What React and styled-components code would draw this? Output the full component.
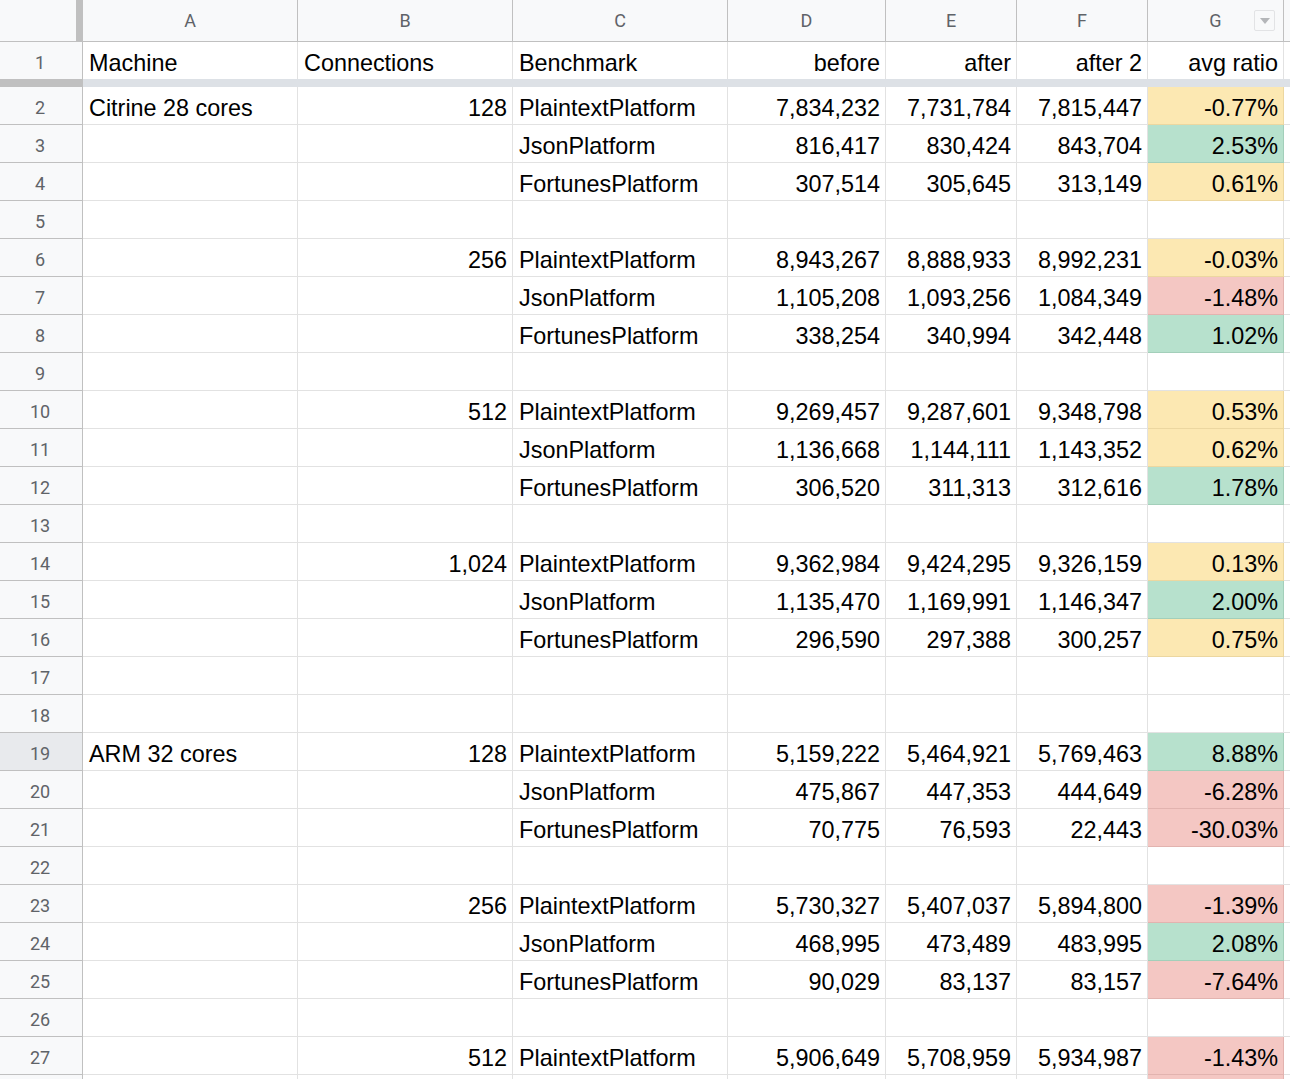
import React from "react";
import styled, { createGlobalStyle } from "styled-components";

const GlobalStyle = createGlobalStyle`
  html, body {
    margin: 0;
    padding: 0;
    background: #fff;
    overflow: hidden;
  }
`;

const COLS = "83px 215px 215px 215px 158px 131px 131px 136px 60px";

const tones = {
  yellow: { bg: "#fce8b2", line: "#ecd7a0" },
  green: { bg: "#b7e1cd", line: "#a3cfba" },
  red: { bg: "#f4c7c3", line: "#e2b3af" },
};

const Sheet = styled.div`
  width: 1290px;
  height: 1079px;
  overflow: hidden;
  font-family: "Liberation Sans", Arial, sans-serif;
  color: #000;
`;

const HeaderRow = styled.div`
  display: grid;
  grid-template-columns: ${COLS};
  height: 42px;
  background: #f8f9fa;
  border-bottom: 1px solid #c0c0c0;
  box-sizing: border-box;
`;

const Corner = styled.div`
  border-right: 7px solid #c0c0c0;
  box-sizing: border-box;
`;

const ColHead = styled.div`
  position: relative;
  display: flex;
  align-items: center;
  justify-content: center;
  border-right: 1px solid #c0c0c0;
  box-sizing: border-box;
  font-family: Roboto, "Liberation Sans", sans-serif;
  font-size: 18px;
  color: #5f6368;
`;

const FilterButton = styled.div`
  position: absolute;
  right: 8px;
  top: 10px;
  width: 21px;
  height: 21px;
  box-sizing: border-box;
  border: 1px solid #e2e3e5;
  border-radius: 2px;
  display: flex;
  align-items: center;
  justify-content: center;
`;

const Row = styled.div`
  display: grid;
  grid-template-columns: ${COLS};
  height: ${(p) => (p.$frozen ? 37 : 38)}px;
`;

const FreezeBar = styled.div`
  display: grid;
  grid-template-columns: 83px 1fr;
  height: 8px;
  background: #dde1e6;
`;

const FreezeBarHead = styled.div`
  background: #c0c0c0;
`;

const RowHead = styled.div`
  display: flex;
  align-items: center;
  justify-content: center;
  padding: 3px 2px 0 0;
  background: ${(p) => (p.$active ? "#e8eaed" : "#f8f9fa")};
  border-right: 1px solid #c0c0c0;
  border-bottom: ${(p) => (p.$frozen ? "none" : "1px solid #c0c0c0")};
  box-sizing: border-box;
  font-family: Roboto, "Liberation Sans", sans-serif;
  font-size: 18px;
  color: #5f6368;
`;

const Cell = styled.div`
  display: flex;
  align-items: center;
  justify-content: ${(p) => (p.$right ? "flex-end" : "flex-start")};
  padding: 5px 5px 0 6px;
  box-sizing: border-box;
  white-space: nowrap;
  overflow: hidden;
  font-size: 23.4px;
  background: ${(p) => (p.$tone ? tones[p.$tone].bg : "#fff")};
  border-right: 1px solid ${(p) => (p.$tone ? tones[p.$tone].line : "#e2e2e2")};
  border-bottom: ${(p) =>
    p.$frozen ? "none" : `1px solid ${p.$tone ? tones[p.$tone].line : "#e2e2e2"}`};
`;

const letters = ["A", "B", "C", "D", "E", "F", "G", ""];

const rows = [
  ["Citrine 28 cores", "128", "PlaintextPlatform", "7,834,232", "7,731,784", "7,815,447", "-0.77%", "yellow"],
  ["", "", "JsonPlatform", "816,417", "830,424", "843,704", "2.53%", "green"],
  ["", "", "FortunesPlatform", "307,514", "305,645", "313,149", "0.61%", "yellow"],
  null,
  ["", "256", "PlaintextPlatform", "8,943,267", "8,888,933", "8,992,231", "-0.03%", "yellow"],
  ["", "", "JsonPlatform", "1,105,208", "1,093,256", "1,084,349", "-1.48%", "red"],
  ["", "", "FortunesPlatform", "338,254", "340,994", "342,448", "1.02%", "green"],
  null,
  ["", "512", "PlaintextPlatform", "9,269,457", "9,287,601", "9,348,798", "0.53%", "yellow"],
  ["", "", "JsonPlatform", "1,136,668", "1,144,111", "1,143,352", "0.62%", "yellow"],
  ["", "", "FortunesPlatform", "306,520", "311,313", "312,616", "1.78%", "green"],
  null,
  ["", "1,024", "PlaintextPlatform", "9,362,984", "9,424,295", "9,326,159", "0.13%", "yellow"],
  ["", "", "JsonPlatform", "1,135,470", "1,169,991", "1,146,347", "2.00%", "green"],
  ["", "", "FortunesPlatform", "296,590", "297,388", "300,257", "0.75%", "yellow"],
  null,
  null,
  ["ARM 32 cores", "128", "PlaintextPlatform", "5,159,222", "5,464,921", "5,769,463", "8.88%", "green"],
  ["", "", "JsonPlatform", "475,867", "447,353", "444,649", "-6.28%", "red"],
  ["", "", "FortunesPlatform", "70,775", "76,593", "22,443", "-30.03%", "red"],
  null,
  ["", "256", "PlaintextPlatform", "5,730,327", "5,407,037", "5,894,800", "-1.39%", "red"],
  ["", "", "JsonPlatform", "468,995", "473,489", "483,995", "2.08%", "green"],
  ["", "", "FortunesPlatform", "90,029", "83,137", "83,157", "-7.64%", "red"],
  null,
  ["", "512", "PlaintextPlatform", "5,906,649", "5,708,959", "5,934,987", "-1.43%", "red"],
];

function FilterIcon() {
  return (
    <FilterButton>
      <svg width="10" height="6" viewBox="0 0 10 6">
        <path d="M0 0 L10 0 L5 6 Z" fill="#b4b6b9" />
      </svg>
    </FilterButton>
  );
}

function DataRow({ num, data, tone }) {
  const d = data || ["", "", "", "", "", "", "", tone || null];
  return (
    <Row>
      <RowHead $active={num === 19}>{num}</RowHead>
      <Cell>{d[0]}</Cell>
      <Cell $right>{d[1]}</Cell>
      <Cell>{d[2]}</Cell>
      <Cell $right>{d[3]}</Cell>
      <Cell $right>{d[4]}</Cell>
      <Cell $right>{d[5]}</Cell>
      <Cell $right $tone={d[7]}>{d[6]}</Cell>
      <Cell />
    </Row>
  );
}

export default function App() {
  return (
    <Sheet>
      <GlobalStyle />
      <HeaderRow>
        <Corner />
        {letters.map((l) => (
          <ColHead key={l || "h"}>
            {l}
            {l === "G" && <FilterIcon />}
          </ColHead>
        ))}
      </HeaderRow>
      <Row $frozen>
        <RowHead $frozen>1</RowHead>
        <Cell $frozen>Machine</Cell>
        <Cell $frozen>Connections</Cell>
        <Cell $frozen>Benchmark</Cell>
        <Cell $frozen $right>before</Cell>
        <Cell $frozen $right>after</Cell>
        <Cell $frozen $right>after 2</Cell>
        <Cell $frozen $right>avg ratio</Cell>
        <Cell $frozen />
      </Row>
      <FreezeBar>
        <FreezeBarHead />
        <div />
      </FreezeBar>
      {rows.map((r, i) => (
        <DataRow key={i} num={i + 2} data={r} />
      ))}
      {/* row 28 only peeks in at the bottom edge */}
      <DataRow num="" tone="red" />
    </Sheet>
  );
}
